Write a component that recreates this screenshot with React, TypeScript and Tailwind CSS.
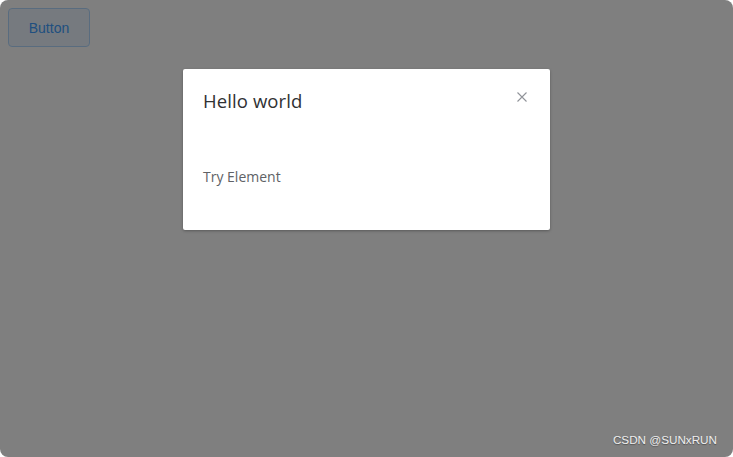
import React from "react";

export default function App() {
  return (
    <div className="w-[733px] h-[457px] bg-white">
      <div
        className="relative w-full h-full rounded-[8px] overflow-hidden bg-white"
        style={{ fontFamily: '"Open Sans", "Noto Sans", sans-serif' }}
      >
        <div className="p-2">
          <button className="w-[82px] h-[39px] pt-[2px] rounded-[4px] border border-[#b3d8ff] bg-[#ecf5ff] text-[#409eff] text-[14px]" style={{ fontFamily: '"Liberation Sans", Arial, sans-serif' }}>
            Button
          </button>
        </div>
        <div className="absolute inset-0 bg-[rgba(0,0,0,0.5)] flex flex-col items-center">
          <div className="mt-[69px] w-[367px] h-[161px] bg-white rounded-[2px] shadow-[0_1px_3px_rgba(0,0,0,0.3)] flex flex-col">
            <div className="relative px-5 pt-5">
              <span className="text-[18.5px] leading-[24px] text-[#303133] tracking-[0.1px]">Hello world</span>
              <svg
                className="absolute top-[23px] right-[23px]"
                width="10"
                height="10"
                viewBox="0 0 10 10"
              >
                <path d="M0.5 0.5 L9.5 9.5 M9.5 0.5 L0.5 9.5" stroke="#909399" strokeWidth="1.1" fill="none" />
              </svg>
            </div>
            <div className="px-5 mt-[53px] text-[14px] leading-[20px] text-[#606266]">Try Element</div>
          </div>
        </div>
        <div
          className="absolute right-[16px] bottom-[8px] text-[11.7px] text-[#eeeeee] [text-shadow:0_1px_1px_rgba(0,0,0,0.35)]"
          style={{ fontFamily: '"Liberation Sans", Arial, sans-serif' }}
        >
          CSDN @SUNxRUN
        </div>
      </div>
    </div>
  );
}
